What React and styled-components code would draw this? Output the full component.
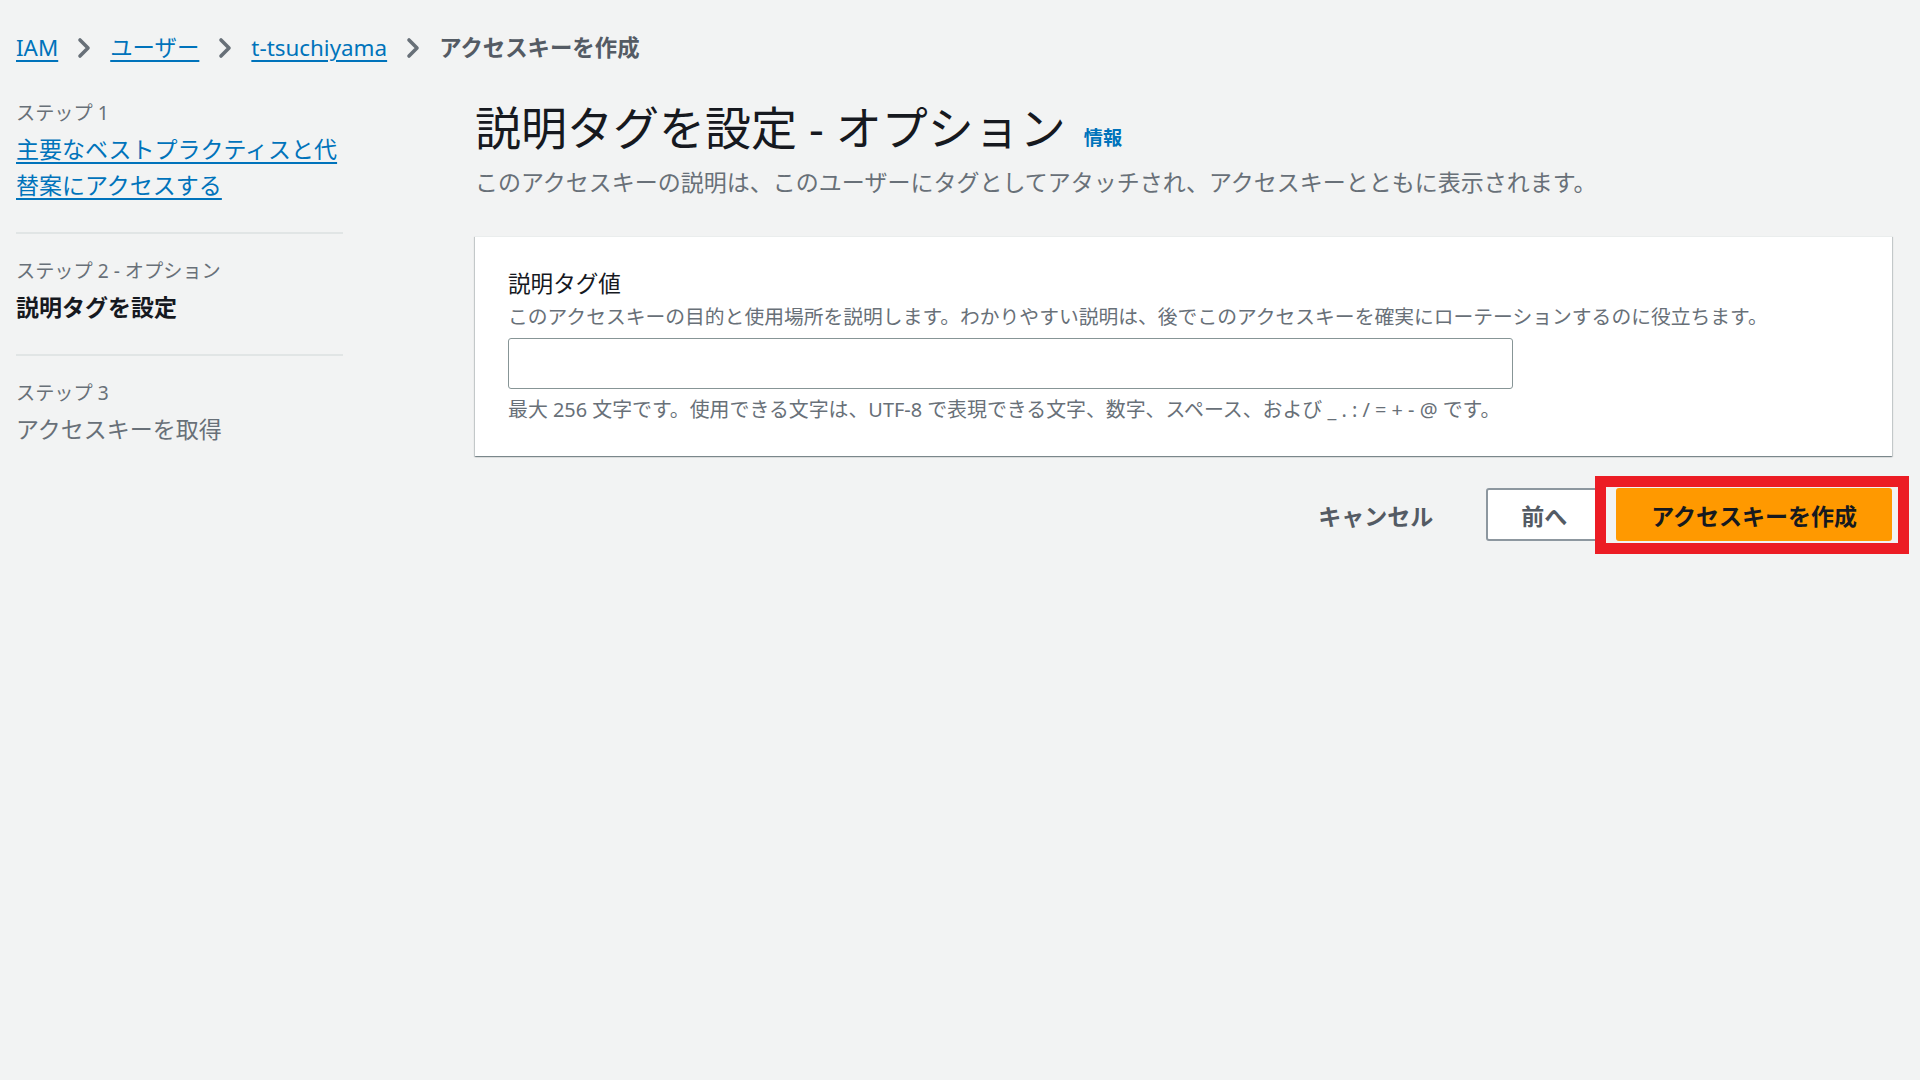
import React from 'react'
import styled, { createGlobalStyle } from 'styled-components'

const GlobalStyle = createGlobalStyle`
  html, body {
    margin: 0;
    padding: 0;
    background: #f2f3f3;
  }
  body {
    font-family: 'Noto Sans', 'Noto Sans CJK JP', sans-serif;
    color: #16191f;
    font-size: 22.4px;
  }
`

const Page = styled.div`
  min-height: 100vh;
  padding: 32px 28px 0 16px;
  box-sizing: border-box;
`

const Breadcrumbs = styled.nav`
  display: flex;
  align-items: center;
  gap: 19px;
  line-height: 32px;
  font-size: 22.4px;
`

const Crumb = styled.a`
  color: #0073bb;
  text-decoration: underline;
  text-underline-offset: 4px;
  cursor: pointer;
`

const CurrentCrumb = styled.span`
  color: #545b64;
  font-weight: 700;
`

const Chevron = () => (
  <svg width="14" height="22" viewBox="0 0 14 22" fill="none">
    <path d="M3 3 L11 11 L3 19" stroke="#687078" strokeWidth="3.6" strokeLinecap="round" strokeLinejoin="round" />
  </svg>
)

const Layout = styled.div`
  display: grid;
  grid-template-columns: 327px 1fr;
  column-gap: 132px;
  margin-top: 33px;
`

const Nav = styled.ol`
  list-style: none;
  margin: 0;
  padding: 0;
`

const Step = styled.li`
  padding: 21px 0 29px;
  border-bottom: 2px solid #e1e5e5;

  &:first-child {
    padding-top: 0;
  }
  &:last-child {
    border-bottom: none;
  }
`

const StepLabel = styled.div`
  font-size: 19.2px;
  line-height: 32px;
  color: #687078;
  margin-bottom: 2px;
`

const StepTitle = styled.div`
  font-size: 23px;
  line-height: 36px;
  color: ${p => (p.$state === 'link' ? '#0073bb' : p.$state === 'active' ? '#16191f' : '#687078')};
  font-weight: ${p => (p.$state === 'active' ? 700 : 400)};
  text-decoration: ${p => (p.$state === 'link' ? 'underline' : 'none')};
  text-underline-offset: 4px;
`

const Main = styled.main`
  min-width: 0;
`

const TitleRow = styled.div`
  display: flex;
  align-items: baseline;
  gap: 18px;
  line-height: 60px;
`

const Title = styled.h1`
  margin: 0;
  font-size: 46px;
  font-weight: 400;
  color: #16191f;
`

const InfoLink = styled.a`
  font-size: 19.2px;
  font-weight: 700;
  color: #0073bb;
  text-decoration: none;
`

const Lead = styled.p`
  margin: -2px 0 0;
  font-size: 23px;
  line-height: 32px;
  color: #687078;
`

const Card = styled.section`
  margin-top: 38px;
  background: #fff;
  padding: 31px 33px 32px;
  border-top: 1px solid #eaeded;
  box-shadow: 0 1px 1px 0 rgba(0, 28, 36, 0.3), 1px 1px 1px 0 rgba(0, 28, 36, 0.15), -1px 1px 1px 0 rgba(0, 28, 36, 0.15);
`

const FieldLabel = styled.label`
  display: block;
  font-size: 22.6px;
  line-height: 32px;
  color: #16191f;
`

const FieldDesc = styled.div`
  margin-top: 2px;
  font-size: 19.8px;
  line-height: 30px;
  color: #687078;
`

const Input = styled.input`
  display: block;
  box-sizing: border-box;
  margin-top: 6px;
  width: 1005px;
  height: 51px;
  border: 1.5px solid #879596;
  border-radius: 3px;
  background: #fff;
  font: inherit;
  padding: 0 16px;
  outline: none;
`

const Constraint = styled.div`
  margin-top: 7px;
  font-size: 19.9px;
  line-height: 28px;
  color: #687078;
`

const Actions = styled.div`
  display: flex;
  justify-content: flex-end;
  align-items: center;
  gap: 14px;
  margin-top: 32px;
`

const TextButton = styled.button`
  height: 53px;
  padding: 0 39px;
  border: none;
  background: transparent;
  font-family: inherit;
  font-size: 23px;
  font-weight: 700;
  color: #545b64;
  cursor: pointer;
`

const Button = styled.button`
  box-sizing: border-box;
  height: 53px;
  padding: 0 33px;
  border-radius: 3px;
  font-family: inherit;
  font-size: 23px;
  font-weight: 700;
  cursor: pointer;
  border: 2px solid ${p => (p.$primary ? '#ff9900' : '#8d979f')};
  background: ${p => (p.$primary ? '#ff9900' : '#fff')};
  color: ${p => (p.$primary ? '#16191f' : '#545b64')};
`

const Marked = styled.span`
  position: relative;
  display: inline-flex;
`

const Highlight = styled.span`
  position: absolute;
  top: -12px;
  bottom: -13px;
  left: -21px;
  right: -17px;
  border: 11px solid #ec1c24;
  pointer-events: none;
`

const steps = [
  { label: 'ステップ 1', title: '主要なベストプラクティスと代替案にアクセスする', state: 'link' },
  { label: 'ステップ 2 - オプション', title: '説明タグを設定', state: 'active' },
  { label: 'ステップ 3', title: 'アクセスキーを取得', state: 'disabled' },
]

export default function App () {
  return (
    <Page>
      <GlobalStyle />
      <Breadcrumbs>
        <Crumb>IAM</Crumb>
        <Chevron />
        <Crumb>ユーザー</Crumb>
        <Chevron />
        <Crumb>t-tsuchiyama</Crumb>
        <Chevron />
        <CurrentCrumb>アクセスキーを作成</CurrentCrumb>
      </Breadcrumbs>

      <Layout>
        <Nav>
          {steps.map((s, i) => (
            <Step key={i}>
              <StepLabel>{s.label}</StepLabel>
              <StepTitle $state={s.state}>{s.title}</StepTitle>
            </Step>
          ))}
        </Nav>

        <Main>
          <TitleRow>
            <Title>説明タグを設定 - オプション</Title>
            <InfoLink>情報</InfoLink>
          </TitleRow>
          <Lead>このアクセスキーの説明は、このユーザーにタグとしてアタッチされ、アクセスキーとともに表示されます。</Lead>

          <Card>
            <FieldLabel>説明タグ値</FieldLabel>
            <FieldDesc>このアクセスキーの目的と使用場所を説明します。わかりやすい説明は、後でこのアクセスキーを確実にローテーションするのに役立ちます。</FieldDesc>
            <Input type="text" />
            <Constraint>最大 256 文字です。使用できる文字は、UTF-8 で表現できる文字、数字、スペース、および _ . : / = + - @ です。</Constraint>
          </Card>

          <Actions>
            <TextButton>キャンセル</TextButton>
            <Button>前へ</Button>
            <Marked>
              <Button $primary>アクセスキーを作成</Button>
              <Highlight />
            </Marked>
          </Actions>
        </Main>
      </Layout>
    </Page>
  )
}
